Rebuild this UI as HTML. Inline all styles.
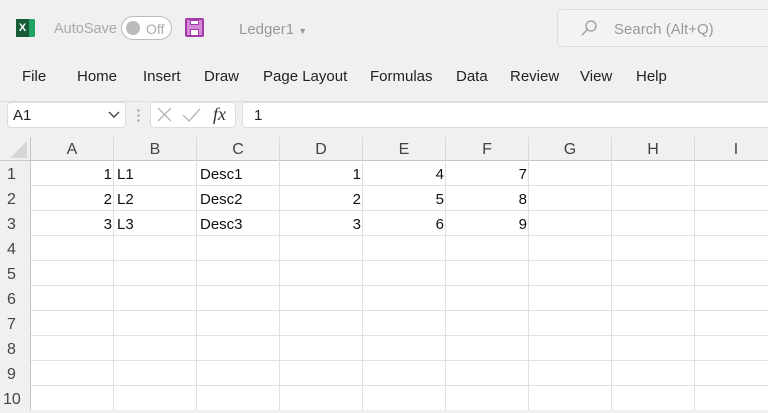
<!DOCTYPE html>
<html><head><meta charset="utf-8"><style>
*{margin:0;padding:0;box-sizing:border-box}
body{width:768px;height:410px;overflow:hidden;background:#f0f0f0;font-family:"Liberation Sans",sans-serif;position:relative;color:#222}
.a{position:absolute}
.menu span{position:absolute;top:68px;font-size:15px;color:#222}
.ch{position:absolute;top:137px;height:24px;font-size:16px;color:#444;text-align:center;line-height:25px;border-right:1px solid #d8d8d8}
.rh{position:absolute;left:0;width:31px;height:25px;font-size:16px;color:#444;padding-left:7px;line-height:27px}
.c{position:absolute;font-size:15px;color:#111;line-height:27px;height:25px}
</style></head><body>
<!-- title bar -->
<div class="a" style="left:16px;top:19px;width:19px;height:18px;background:#1e7145;border-radius:2px"></div>
<div class="a" style="left:24px;top:19px;width:11px;height:18px;background:#21a366;border-radius:0 2px 2px 0"></div>
<div class="a" style="left:16px;top:19px;width:13px;height:18px;color:#fff;font-size:11px;font-weight:bold;text-align:center;line-height:18px;background:#185c37">X</div>
<div class="a" style="left:54px;top:21px;font-size:14.5px;color:#aaa">AutoSave</div>
<div class="a" style="left:121px;top:16px;width:51px;height:24px;border:1px solid #bbb;border-radius:12px;background:#fff"></div>
<div class="a" style="left:126px;top:21px;width:14px;height:14px;border-radius:50%;background:#bbb"></div>
<div class="a" style="left:146px;top:21px;font-size:14px;color:#aaa">Off</div>
<div class="a" style="left:185px;top:18px;width:19px;height:19px;background:#d48ad8;border:2px solid #a43aa8;border-radius:2px"></div>
<div class="a" style="left:190px;top:20px;width:9px;height:5px;background:#fff;border:1px solid #a43aa8"></div>
<div class="a" style="left:190px;top:29px;width:9px;height:7px;background:#fff;border:1px solid #a43aa8"></div>
<div class="a" style="left:239px;top:21px;font-size:15px;color:#999">Ledger1 <span style="font-size:9px">▼</span></div>
<div class="a" style="left:557px;top:9px;width:220px;height:38px;border:1px solid #ddd;border-radius:5px;background:#f3f3f3"></div>
<svg class="a" style="left:580px;top:19px" width="18" height="18" viewBox="0 0 18 18"><circle cx="11" cy="7" r="5" fill="none" stroke="#999" stroke-width="1.3"/><path d="M7.5 10.5L2 16" stroke="#999" stroke-width="1.3"/></svg>
<div class="a" style="left:614px;top:21px;font-size:15px;color:#999">Search (Alt+Q)</div>
<!-- menu -->
<div class="menu">
<span style="left:22px">File</span><span style="left:77px">Home</span><span style="left:143px">Insert</span><span style="left:204px">Draw</span><span style="left:263px">Page Layout</span><span style="left:370px">Formulas</span><span style="left:456px">Data</span><span style="left:510px">Review</span><span style="left:580px">View</span><span style="left:636px">Help</span>
</div>
<div class="a" style="left:0;top:101px;width:768px;height:1px;background:#ddd"></div>
<!-- formula bar -->
<div class="a" style="left:7px;top:102px;width:119px;height:26px;background:#fff;border:1px solid #ddd;border-radius:4px"></div>
<div class="a" style="left:13px;top:107px;font-size:15px">A1</div>
<svg class="a" style="left:108px;top:111px" width="12" height="8"><path d="M1 1L6 6L11 1" fill="none" stroke="#444" stroke-width="1.4"/></svg>
<div class="a" style="left:137px;top:108px;width:3px;height:14px;background:radial-gradient(circle,#999 1px,transparent 1.3px) 0 0/3px 5px"></div>
<div class="a" style="left:150px;top:102px;width:86px;height:26px;background:#fff;border:1px solid #ddd;border-radius:4px"></div>
<svg class="a" style="left:156px;top:106px" width="80" height="18"><path d="M2 2L15 15M15 2L2 15" stroke="#aaa" stroke-width="1.2"/><path d="M27 9L33 15L44 3" fill="none" stroke="#aaa" stroke-width="1.2"/></svg>
<div class="a" style="left:213px;top:104px;font-size:18px;font-style:italic;font-family:'Liberation Serif',serif;color:#333"><i>fx</i></div>
<div class="a" style="left:242px;top:102px;width:540px;height:26px;background:#fff;border:1px solid #ddd;border-radius:4px"></div>
<div class="a" style="left:254px;top:107px;font-size:15px">1</div>
<!-- grid -->
<div class="a" style="left:31px;top:161px;width:737px;height:249px;background:#fff;background-image:linear-gradient(#e1e1e1 1px,transparent 1px),linear-gradient(90deg,#e1e1e1 1px,transparent 1px);background-size:100% 25px,83px 100%;background-position:0 -1px,-1px 0"></div>
<div class="a" style="left:0;top:160px;width:768px;height:1px;background:#c6c6c6"></div>
<div class="a" style="left:30px;top:137px;width:1px;height:273px;background:#c6c6c6"></div>
<svg class="a" style="left:10px;top:141px" width="18" height="18"><path d="M17 0V17H0Z" fill="#d6d6d6"/></svg>
<div class="ch" style="left:31px;width:83px">A</div><div class="ch" style="left:114px;width:83px">B</div><div class="ch" style="left:197px;width:83px">C</div><div class="ch" style="left:280px;width:83px">D</div><div class="ch" style="left:363px;width:83px">E</div><div class="ch" style="left:446px;width:83px">F</div><div class="ch" style="left:529px;width:83px">G</div><div class="ch" style="left:612px;width:83px">H</div><div class="ch" style="left:695px;width:83px">I</div>
<div class="rh" style="top:161px">1</div><div class="rh" style="top:186px">2</div><div class="rh" style="top:211px">3</div><div class="rh" style="top:236px">4</div><div class="rh" style="top:261px">5</div><div class="rh" style="top:286px">6</div><div class="rh" style="top:311px">7</div><div class="rh" style="top:336px">8</div><div class="rh" style="top:361px">9</div><div class="rh" style="top:386px;padding-left:3px">10</div>
<div class="c" style="top:161px;left:31px;width:81px;text-align:right">1</div>
<div class="c" style="top:186px;left:31px;width:81px;text-align:right">2</div>
<div class="c" style="top:211px;left:31px;width:81px;text-align:right">3</div>
<div class="c" style="top:161px;left:117px">L1</div><div class="c" style="top:186px;left:117px">L2</div><div class="c" style="top:211px;left:117px">L3</div>
<div class="c" style="top:161px;left:200px">Desc1</div><div class="c" style="top:186px;left:200px">Desc2</div><div class="c" style="top:211px;left:200px">Desc3</div>
<div class="c" style="top:161px;left:280px;width:81px;text-align:right">1</div><div class="c" style="top:186px;left:280px;width:81px;text-align:right">2</div><div class="c" style="top:211px;left:280px;width:81px;text-align:right">3</div>
<div class="c" style="top:161px;left:363px;width:81px;text-align:right">4</div><div class="c" style="top:186px;left:363px;width:81px;text-align:right">5</div><div class="c" style="top:211px;left:363px;width:81px;text-align:right">6</div>
<div class="c" style="top:161px;left:446px;width:81px;text-align:right">7</div><div class="c" style="top:186px;left:446px;width:81px;text-align:right">8</div><div class="c" style="top:211px;left:446px;width:81px;text-align:right">9</div>
</body></html>
